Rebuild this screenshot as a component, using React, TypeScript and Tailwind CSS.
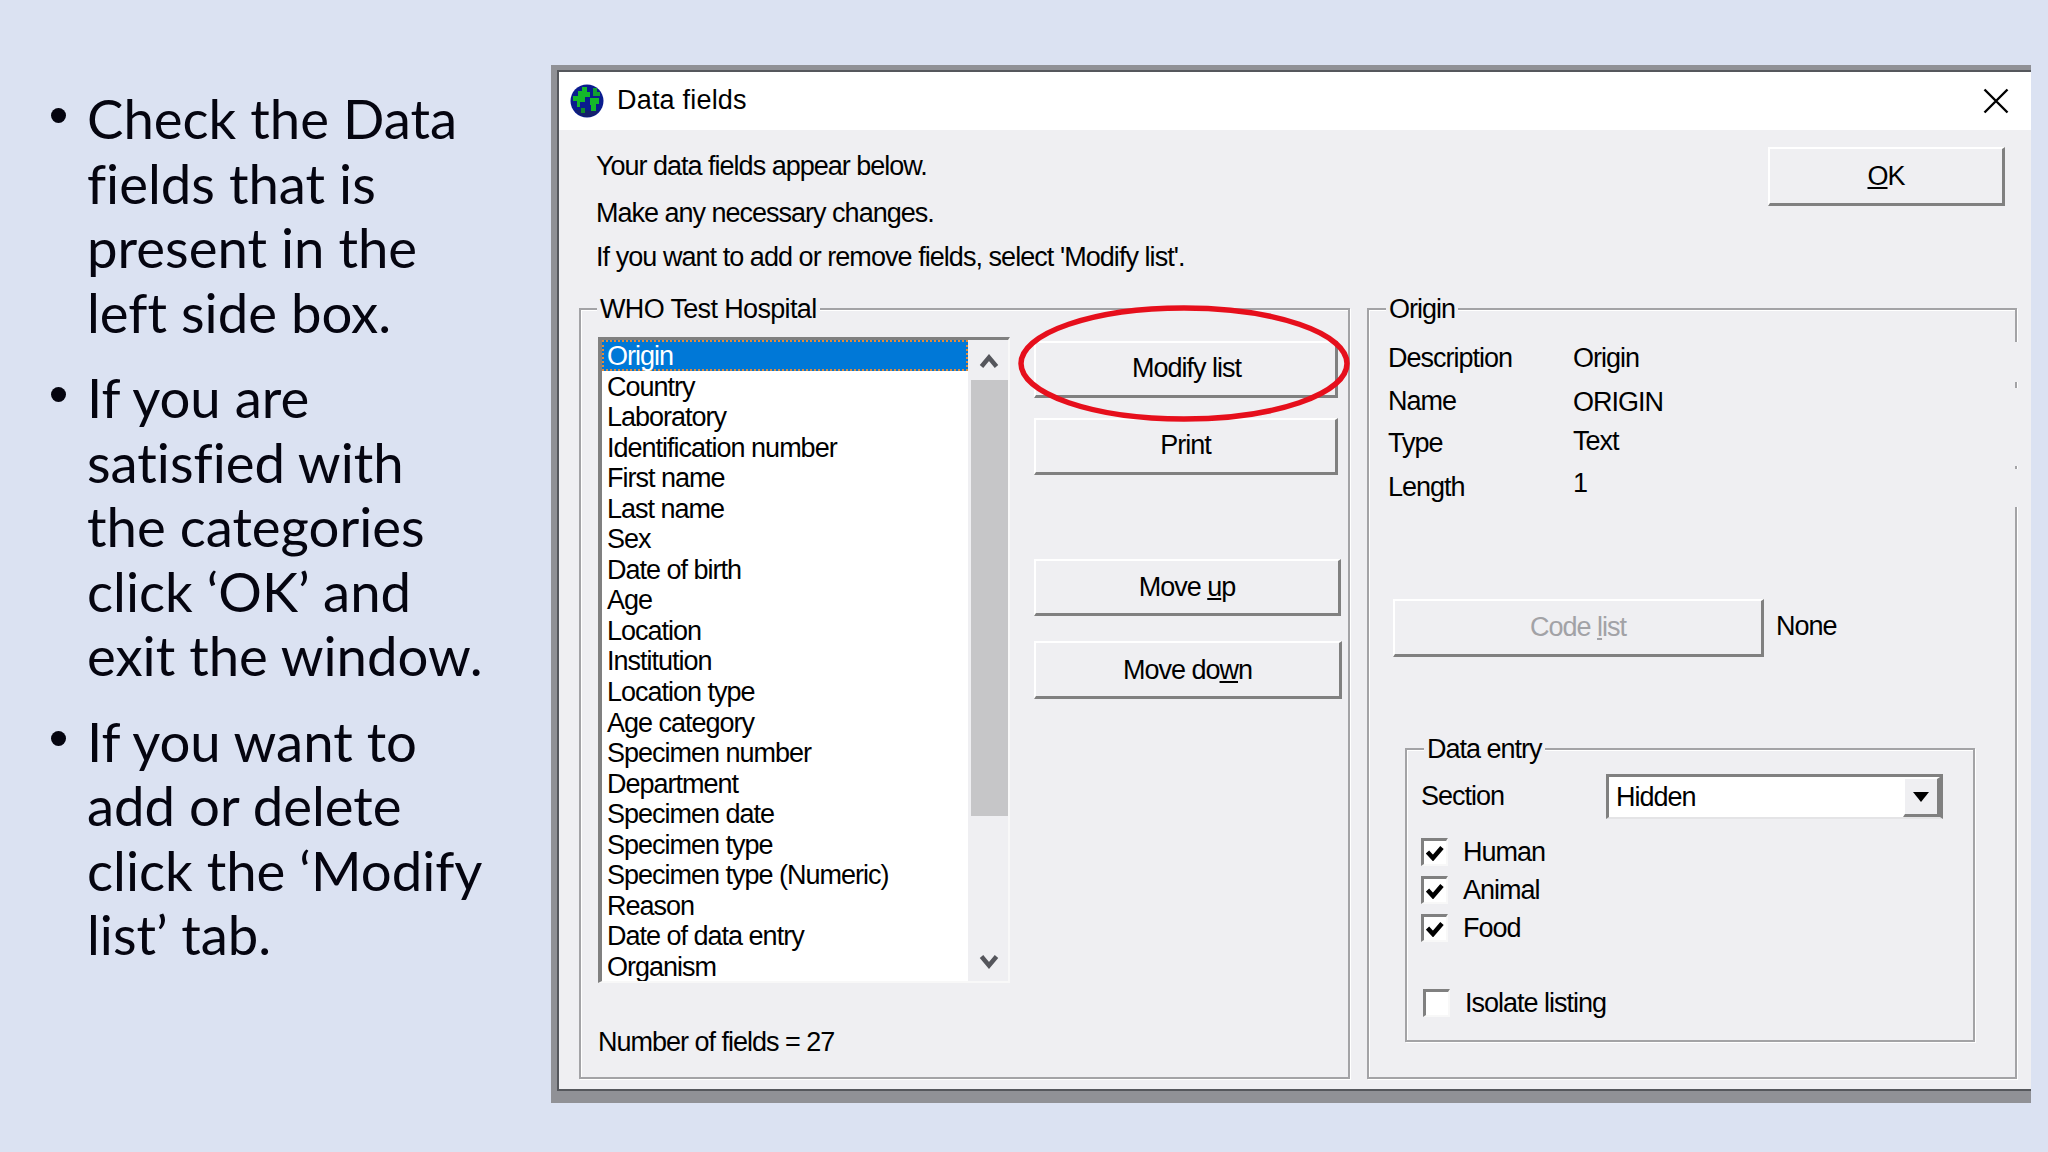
import React from 'react'

const bullets = [
  ['Check the Data', 'fields that is', 'present in the', 'left side box.'],
  ['If you are', 'satisfied with', 'the categories', 'click ‘OK’ and', 'exit the window.'],
  ['If you want to', 'add or delete', 'click the ‘Modify', 'list’ tab.'],
]

const fields = [
  'Country', 'Laboratory', 'Identification number', 'First name', 'Last name', 'Sex', 'Date of birth', 'Age',
  'Location', 'Institution', 'Location type', 'Age category', 'Specimen number', 'Department', 'Specimen date',
  'Specimen type', 'Specimen type (Numeric)', 'Reason', 'Date of data entry', 'Organism',
]

function WinButton({ className, children }: { className: string; children: React.ReactNode }) {
  return (
    <div className={`flex items-center justify-center border-t-2 border-l-2 border-white border-r-[3px] border-b-[3px] border-r-[#808080] border-b-[#808080] ${className}`}>
      {children}
    </div>
  )
}

function Check({ checked, label, className = '' }: { checked: boolean; label: string; className?: string }) {
  return (
    <div className={`flex h-[28px] items-center gap-[15px] ${className}`}>
      <div className="flex h-[28px] w-[27px] items-center justify-center border-t-[3px] border-l-[3px] border-[#808080] border-r-2 border-b-2 border-r-[#f8f8f8] border-b-[#f8f8f8] bg-white">
        {checked && (
          <svg width="18" height="16" viewBox="0 0 18 16">
            <path d="M1.5 7 L7 13 L16 2.5" fill="none" stroke="#000" strokeWidth="4.5" />
          </svg>
        )}
      </div>
      <span>{label}</span>
    </div>
  )
}

function Globe() {
  return (
    <svg width="34" height="34" viewBox="0 0 34 34">
      <circle cx="17" cy="17" r="16.5" fill="#0a1c8e" />
      <path d="M5 26a16 16 0 0 0 12 7a16 16 0 0 0 12-6z" fill="#14206a" />
      <path d="M12 3h5v5h3v5h-5v5h-5v5H7v-6H3v-5h5V7h4z" fill="#14b82a" />
      <path d="M20 14h9v6h-3v7h-5v-6h-1z" fill="#14b82a" />
      <path d="M23 4h4v4h3v4h-7z" fill="#12a030" />
      <path d="M11 24h4v5h-4z" fill="#0f8a2c" />
    </svg>
  )
}

export default function App() {
  return (
    <div className="flex h-[1152px] w-[2048px] overflow-hidden bg-[#dbe2f2] text-[#050510]" style={{ fontFamily: '"Liberation Sans", Arial, sans-serif' }}>
      {/* Slide bullets */}
      <div className="flex w-[551px] shrink-0 flex-col gap-[21px] pl-[51px] pt-[86px] font-['Lato',sans-serif] text-[54.5px] leading-[64.5px] [font-variant-ligatures:none]">
        {bullets.map((lines, i) => (
          <div key={i} className="flex">
            <div className="mt-[22px] mr-[21px] h-[15px] w-[15px] shrink-0 rounded-full bg-[#050510]" />
            <div>
              {lines.map((l) => (
                <div key={l} className="whitespace-nowrap">{l}</div>
              ))}
            </div>
          </div>
        ))}
      </div>

      {/* Dialog screenshot */}
      <div className="mt-[65px] flex h-[1038px] w-[1480px] flex-col border-t-[5px] border-l-[6px] border-b-[12px] border-[#909196] text-[27px] leading-[30px] tracking-[-1px] text-black">
        <div className="flex h-full flex-col border-t-[2px] border-l-[2px] border-b-[2px] border-[#55575c] bg-[#efeff2]">
          {/* Title bar */}
          <div className="flex h-[58px] shrink-0 items-center bg-white pl-[11px] pr-[22px]">
            <Globe />
            <span className="ml-[13px] -translate-y-[1px] tracking-[0.2px]">Data fields</span>
            <svg className="ml-auto" width="26" height="26" viewBox="0 0 26 26">
              <path d="M1.5 1.5 L24.5 24.5 M24.5 1.5 L1.5 24.5" stroke="#000" strokeWidth="2.4" />
            </svg>
          </div>

          {/* Intro text + OK */}
          <div className="flex h-[178px] shrink-0 justify-between pl-[37px] pr-[26px]">
            <div className="pt-[21px]">
              <div className="h-[47px]">Your data fields appear below.</div>
              <div className="h-[44px]">Make any necessary changes.</div>
              <div className="tracking-[-0.95px]">If you want to add or remove fields, select 'Modify list'.</div>
            </div>
            <WinButton className="mt-[17px] h-[59px] w-[237px]"><span><u>O</u>K</span></WinButton>
          </div>

          {/* Group boxes */}
          <div className="relative flex gap-[17px] pl-[20px]">
            <div className="relative h-[771px] w-[771px] shrink-0 border-2 border-[#a3a3a6] shadow-[inset_1px_1px_0_#fff,1px_1px_0_#fff] pl-[17px] pt-[27px]">
              <span className="absolute -top-[16px] left-[16px] bg-[#efeff2] px-[3px] tracking-[-0.65px]">WHO Test Hospital</span>
              <div className="flex">
                {/* List */}
                <div className="flex h-[646px] w-[412px] shrink-0 overflow-hidden border-t-[3px] border-l-[4px] border-t-[#808080] border-l-[#808080] border-b-2 border-r-2 border-b-[#f8f8f8] border-r-[#f8f8f8]">
                  <div className="w-[366px] shrink-0 overflow-hidden bg-white leading-[32.5px]">
                    <div className="h-[30.55px] border-2 border-dotted border-[#e08a3c] bg-[#0078d7] pl-[3px] leading-[28px] text-white">Origin</div>
                    {fields.map((f) => (
                      <div key={f} className="h-[30.55px] whitespace-nowrap pl-[5px]">{f}</div>
                    ))}
                  </div>
                  <div className="flex flex-1 flex-col items-center pl-[2px]">
                    <svg className="mt-[14px]" width="20" height="14" viewBox="0 0 20 14">
                      <path d="M2.5 12.5 L10 3.5 L17.5 12.5" fill="none" stroke="#55565c" strokeWidth="4.5" />
                    </svg>
                    <div className="mt-[12px] ml-[1px] h-[436px] w-full bg-[#c6c6c8]" />
                    <svg className="mt-[139px]" width="20" height="14" viewBox="0 0 20 14">
                      <path d="M2.5 1.5 L10 10.5 L17.5 1.5" fill="none" stroke="#55565c" strokeWidth="4.5" />
                    </svg>
                  </div>
                </div>

                {/* Buttons */}
                <div className="ml-[24px] flex flex-col pt-[4px]">
                  <WinButton className="h-[57px] w-[304px]"><span className="-translate-y-[1px] translate-x-[1px]">Modify list</span></WinButton>
                  <WinButton className="mt-[20px] h-[57px] w-[304px]"><span className="-translate-y-[1px]">Print</span></WinButton>
                  <WinButton className="mt-[84px] h-[57px] w-[307px]"><span>Move <u>u</u>p</span></WinButton>
                  <WinButton className="mt-[25px] h-[58px] w-[308px]"><span>Move do<u>w</u>n</span></WinButton>
                </div>
              </div>
              <div className="mt-[44px]">Number of fields = 27</div>
            </div>

            <div className="relative h-[771px] w-[650px] shrink-0 border-2 border-[#a3a3a6] shadow-[inset_1px_1px_0_#fff,1px_1px_0_#fff] pl-[19px] pt-[27px]">
              <span className="absolute -top-[16px] left-[17px] bg-[#efeff2] px-[3px]">Origin</span>
              {/* gaps in the right border */}
              <div className="absolute -right-[3px] top-[32px] h-[40px] w-[5px] bg-[#efeff2]" />
              <div className="absolute -right-[3px] top-[78px] h-[78px] w-[5px] bg-[#efeff2]" />
              <div className="absolute -right-[3px] top-[159px] h-[38px] w-[5px] bg-[#efeff2]" />

              <div className="flex h-[172px] pt-[6px]">
                <div className="w-[185px] shrink-0">
                  <div className="h-[43px]">Description</div>
                  <div className="h-[42px]">Name</div>
                  <div className="h-[44px]">Type</div>
                  <div>Length</div>
                </div>
                <div>
                  <div className="h-[44px]">Origin</div>
                  <div className="h-[39px]">ORIGIN</div>
                  <div className="h-[42px]">Text</div>
                  <div>1</div>
                </div>
              </div>

              <div className="ml-[5px] mt-[90px] flex items-center">
                <WinButton className="h-[58px] w-[371px]"><span className="-translate-y-[1px] text-[#a2a2a6]">Code <u>l</u>ist</span></WinButton>
                <span className="ml-[12px] -translate-y-[2px]">None</span>
              </div>

              {/* Data entry */}
              <div className="relative ml-[17px] mt-[91px] h-[294px] w-[570px] border-2 border-[#a3a3a6] shadow-[inset_1px_1px_0_#fff,1px_1px_0_#fff] pl-[14px] pt-[24px]">
                <span className="absolute -top-[16px] left-[17px] bg-[#efeff2] px-[3px]">Data entry</span>
                <div className="flex items-center">
                  <div className="w-[185px] -translate-y-[1px]">Section</div>
                  <div className="flex h-[45px] w-[337px] items-center border-t-[3px] border-l-[3px] border-[#808080] border-r-[3px] border-b-2 border-b-[#e4e4e6] bg-white pl-[7px]">
                    <span>Hidden</span>
                    <div className="ml-auto flex h-full w-[37px] items-center justify-center border-t-2 border-l-2 border-white border-r-[3px] border-b-[3px] border-r-[#808080] border-b-[#808080] bg-[#efeff2]">
                      <svg width="16" height="10" viewBox="0 0 16 10"><path d="M0 0 H16 L8 10 Z" fill="#000" /></svg>
                    </div>
                  </div>
                </div>
                <div className="mt-[19px] flex flex-col gap-[10px]">
                  <Check checked label="Human" />
                  <Check checked label="Animal" />
                  <Check checked label="Food" />
                </div>
                <Check checked={false} label="Isolate listing" className="ml-[2px] mt-[47px]" />
              </div>
            </div>

            {/* Red ellipse annotation */}
            <svg className="pointer-events-none absolute left-[458px] top-[-4px]" width="334" height="119" viewBox="0 0 334 119">
              <ellipse cx="167" cy="59.5" rx="163" ry="55.5" fill="none" stroke="#e60f1c" strokeWidth="5.5" />
            </svg>
          </div>
        </div>
      </div>
    </div>
  )
}
